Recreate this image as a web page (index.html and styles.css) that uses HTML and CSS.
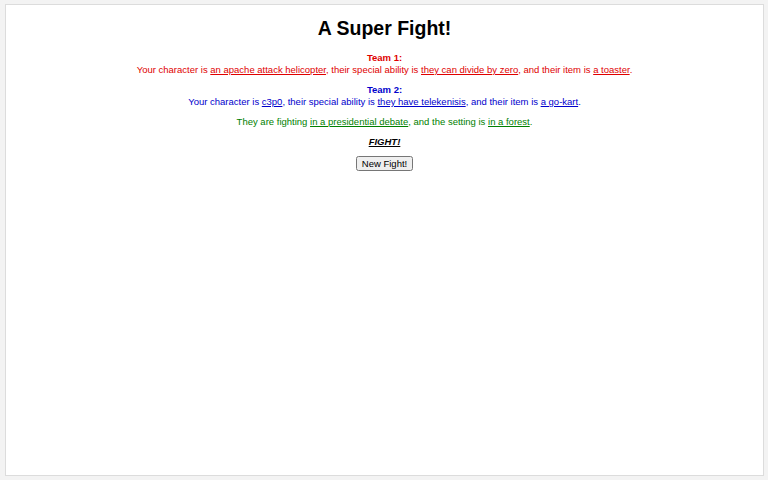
FILE: index.html
```html
<!DOCTYPE html>
<html lang="en">
    <head>
        <meta charset="UTF-8" />
        <meta name="viewport" content="width=device-width, initial-scale=1.0" />
        <title>A Super Fight!</title>
        <link rel="stylesheet" href="styles.css">
    </head>
    <body>
        <div id="main">
            <h1>A Super Fight!</h1>

            <div class="team team1">
                <div class="label">Team 1:</div>
                <div>Your character is <u>an apache attack helicopter</u>, their special ability is <u>they can divide by zero</u>, and their item is <u>a toaster</u>.</div>
            </div>

            <div class="team team2">
                <div class="label">Team 2:</div>
                <div>Your character is <u>c3p0</u>, their special ability is <u>they have telekenisis</u>, and their item is <u>a go-kart</u>.</div>
            </div>

            <div class="setting">They are fighting <u>in a presidential debate</u>, and the setting is <u>in a forest</u>.</div>

            <div class="fight"><u>FIGHT!</u></div>

            <button id="again">New Fight!</button>
        </div>
    </body>
</html>
```

FILE: styles.css
```css
* {
    margin: 0;
    padding: 0;
    box-sizing: border-box;
}

body {
    background-color: #f3f3f3;
    font-family: "Liberation Sans", Arial, sans-serif;
    font-size: 9.5px;
    line-height: 12px;
    padding: 4px 4px 4px 5px;
}

#main {
    height: 472px;
    background-color: #fff;
    border: 1px solid #dcdcdc;
    text-align: center;
    padding-top: 12px;
}

h1 {
    font-size: 19.5px;
    line-height: 23px;
    margin-bottom: 12px;
}

.team {
    margin-bottom: 8px;
}

.label {
    font-weight: bold;
}

.team1 {
    color: #e00000;
}

.team2 {
    color: #0000cc;
}

.setting {
    color: #008000;
    margin-bottom: 8px;
}

.fight {
    font-weight: bold;
    font-style: italic;
    margin-bottom: 8px;
}

#again {
    font-family: "Liberation Sans", Arial, sans-serif;
    font-size: 9.5px;
    line-height: 11px;
    padding: 0 4px;
}
```
